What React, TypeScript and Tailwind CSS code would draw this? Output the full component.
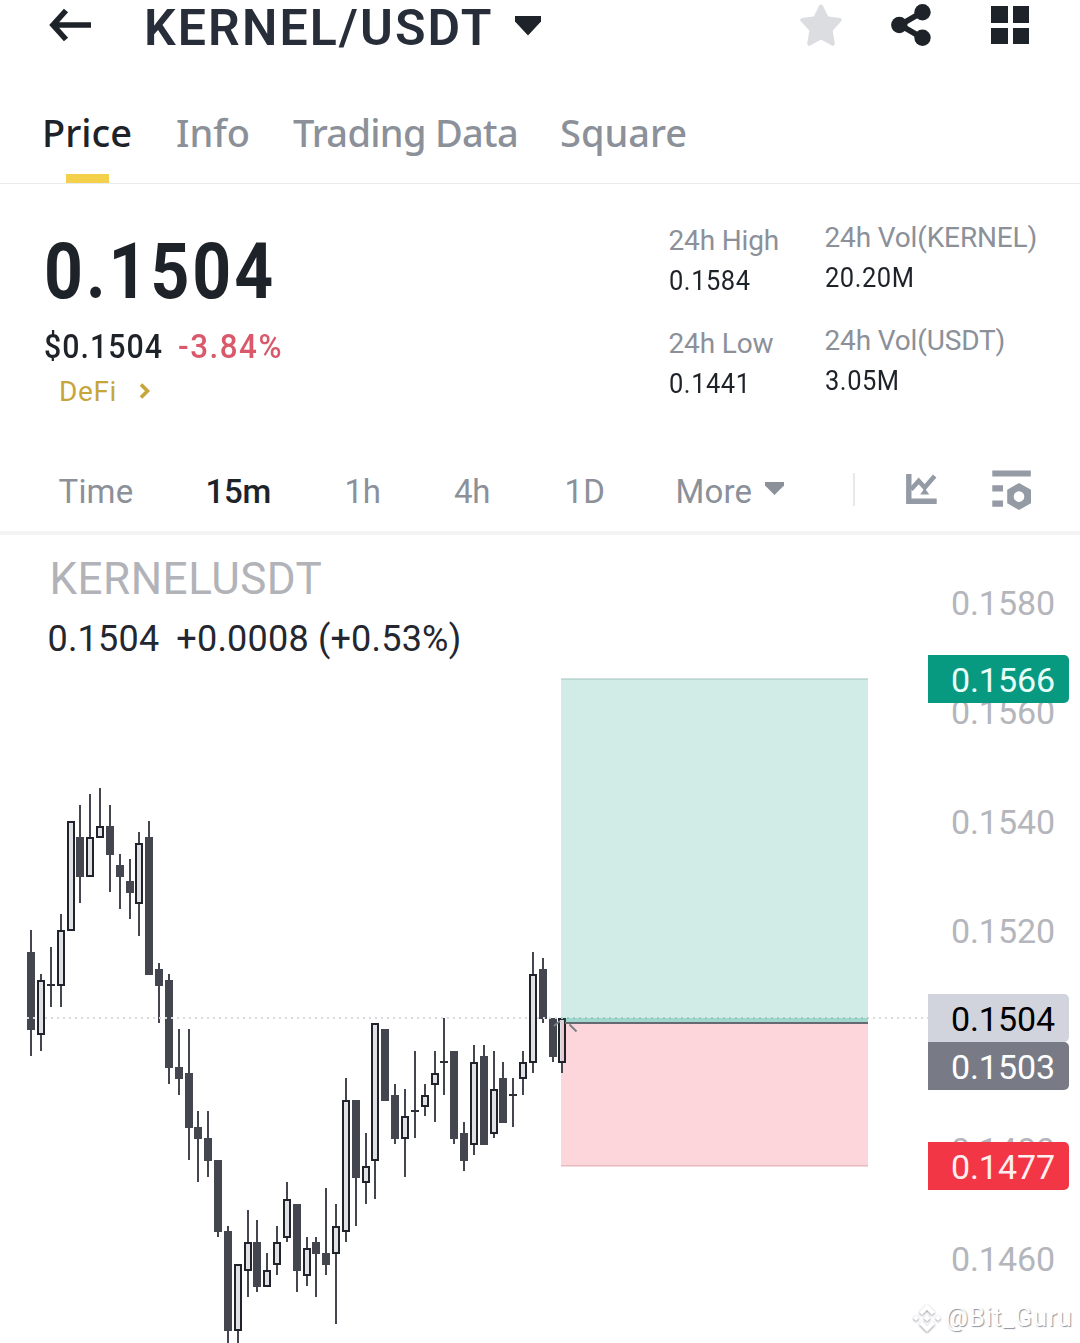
import React from "react";

type Kind = "up" | "down" | "doji";
// [x, high, bodyTop, bodyBottom, low, kind]
type Candle = [number, number, number, number, number, Kind];

const candles: Candle[] = [
  [31, 930, 952, 1030, 1056, "down"],
  [41, 974, 980, 1035, 1051, "up"],
  [51, 947, 985, 985, 1007, "doji"],
  [61, 914, 930, 986, 1007, "up"],
  [71, 821, 821, 931, 931, "up"],
  [80, 805, 837, 877, 903, "down"],
  [90, 794, 837, 877, 877, "up"],
  [100, 788, 826, 838, 838, "up"],
  [110, 805, 826, 855, 892, "down"],
  [120, 854, 865, 877, 909, "down"],
  [130, 859, 881, 893, 919, "down"],
  [139, 832, 843, 904, 936, "up"],
  [149, 821, 837, 975, 975, "down"],
  [159, 963, 969, 986, 1023, "down"],
  [169, 974, 980, 1068, 1084, "down"],
  [179, 1029, 1067, 1079, 1095, "down"],
  [189, 1029, 1073, 1128, 1160, "down"],
  [198, 1111, 1127, 1139, 1182, "down"],
  [208, 1111, 1138, 1161, 1177, "down"],
  [218, 1160, 1160, 1232, 1237, "down"],
  [228, 1226, 1231, 1331, 1343, "down"],
  [238, 1264, 1264, 1331, 1343, "up"],
  [248, 1210, 1242, 1271, 1297, "up"],
  [257, 1220, 1242, 1287, 1292, "down"],
  [267, 1253, 1270, 1287, 1287, "up"],
  [277, 1226, 1242, 1265, 1275, "up"],
  [287, 1182, 1199, 1238, 1242, "up"],
  [297, 1204, 1204, 1271, 1292, "down"],
  [307, 1237, 1248, 1276, 1286, "up"],
  [316, 1237, 1242, 1254, 1297, "down"],
  [326, 1188, 1253, 1265, 1275, "down"],
  [336, 1204, 1226, 1254, 1324, "up"],
  [346, 1078, 1100, 1232, 1242, "up"],
  [356, 1100, 1100, 1178, 1226, "down"],
  [366, 1133, 1166, 1183, 1204, "up"],
  [375, 1023, 1023, 1161, 1199, "up"],
  [385, 1029, 1029, 1101, 1101, "down"],
  [395, 1084, 1095, 1139, 1144, "down"],
  [405, 1089, 1116, 1139, 1177, "up"],
  [415, 1051, 1111, 1111, 1138, "doji"],
  [425, 1084, 1095, 1107, 1116, "up"],
  [435, 1051, 1073, 1085, 1122, "up"],
  [444, 1018, 1062, 1062, 1095, "doji"],
  [454, 1051, 1051, 1139, 1144, "down"],
  [464, 1122, 1133, 1161, 1171, "down"],
  [474, 1045, 1062, 1145, 1155, "up"],
  [484, 1045, 1056, 1145, 1145, "down"],
  [494, 1051, 1089, 1134, 1138, "up"],
  [503, 1062, 1078, 1123, 1123, "down"],
  [513, 1078, 1095, 1095, 1127, "doji"],
  [523, 1051, 1062, 1079, 1095, "up"],
  [533, 952, 974, 1063, 1073, "up"],
  [543, 958, 969, 1019, 1023, "down"],
  [553, 1018, 1018, 1057, 1062, "down"],
  [562, 1018, 1018, 1063, 1073, "up"],
];

function CandleShape({ c }: { c: Candle }) {
  const [x, high, top, bottom, low, kind] = c;
  return (
    <g>
      <rect x={x - 1} y={high} width={2} height={low - high} fill="#43454f" />
      {kind === "down" && <rect x={x - 4} y={top} width={8} height={bottom - top} fill="#43454f" />}
      {kind === "up" && (
        <rect x={x - 3} y={top + 1} width={6} height={bottom - top - 2} fill="#dfe1e5" stroke="#20232b" strokeWidth={2} />
      )}
      {kind === "doji" && <rect x={x - 4} y={top - 1} width={8} height={2} fill="#2c2f38" />}
    </g>
  );
}

function Chart() {
  return (
    <svg className="block h-[808px] w-[928px] shrink-0" viewBox="0 535 928 808">
      <rect x="561" y="1023" width="307" height="143" fill="#fcd6da" />
      {candles.map((c) => (
        <CandleShape key={c[0]} c={c} />
      ))}
      <line x1="27" x2="928" y1="1018" y2="1018" stroke="#d9dadd" strokeWidth="2" strokeDasharray="2 4" />
      <rect x="561" y="679" width="307" height="344" fill="#089981" fillOpacity="0.19" />
      <rect x="561" y="678.5" width="307" height="1" fill="#9fc4bb" />
      <rect x="565" y="1018" width="303" height="5" fill="#089981" fillOpacity="0.24" />
      <rect x="561" y="1020" width="3" height="41" fill="#ecc9ce" />
      <rect x="561" y="1165" width="307" height="1.5" fill="#e9b9be" />
      <rect x="565" y="1022" width="303" height="2" fill="#646a70" />
      <path d="M554 1026l6-5M569.5 1024.5l7 7" stroke="#7b8086" strokeWidth="2" fill="none" />
    </svg>
  );
}

// The 0.1500 gridline label is left blank: the last-price tags occupy its slot.
const ticks = ["0.1580", "0.1560", "0.1540", "0.1520", "", "0.1480", "0.1460"];

function Axis() {
  return (
    <div className="relative flex h-[808px] w-[152px] flex-col overflow-hidden pt-[14px] text-[34px]">
      {ticks.map((t, i) => (
        <div key={i} className="flex h-[109.3px] shrink-0 items-center pl-[23px] tracking-[-0.1px] text-[#b4b6bc]">
          {t}
        </div>
      ))}
      <div className="absolute left-0 top-[120px] flex h-12 w-[141px] items-center rounded-r-[5px] bg-[#089981] pl-[23px] pt-[2px] tracking-[-0.1px] text-[#e9fffa]">0.1566</div>
      <div className="absolute left-0 top-[459px] flex h-12 w-[141px] items-center rounded-r-[5px] bg-[#d1d4dc] pl-[23px] pt-[2px] leading-[40px] tracking-[-0.1px] text-black">0.1504</div>
      <div className="absolute left-0 top-[507px] flex h-12 w-[141px] items-center rounded-r-[5px] bg-[#787b86] pl-[23px] pt-[2px] leading-[40px] tracking-[-0.1px] text-white">0.1503</div>
      <div className="absolute left-0 top-[607px] flex h-12 w-[141px] items-center rounded-r-[5px] bg-[#f23645] pl-[23px] pt-[2px] tracking-[-0.1px] text-[#ffeef0]">0.1477</div>
    </div>
  );
}

function Header() {
  return (
    <header className="flex h-14 text-[#1e2329]">
      <svg className="ml-[48px] mt-[8px] h-[34px] w-[44px]" viewBox="48 8 44 34" fill="none" stroke="currentColor" strokeWidth="5.6">
        <path d="M53 25H91M66 10.5L53 25L66 39.5" />
      </svg>
      <h1 className="ml-[52px] w-[371px] text-[50px] font-semibold leading-[56px] tracking-[2.1px] text-[#272e39]">KERNEL/USDT</h1>
      <svg className="mt-[16px] h-[20px] w-[26px]" viewBox="0 0 26 20" fill="currentColor">
        <path d="M0 0H26V5.5L13 19.5L0 5.5Z" />
      </svg>
      <svg className="ml-[259px] mt-[4px] h-[42px] w-[42px]" viewBox="0 0 42 42" fill="#dcdde1" stroke="#dcdde1" strokeWidth="4" strokeLinejoin="round">
        <path d="M21 2.5L26.8 14.2L39.7 16L30.6 26L32.8 39.8L21 33.2L9.2 39.8L11.4 26L2.3 16L15.2 14.2Z" />
      </svg>
      <svg className="ml-[49px] mt-[4px] h-[42px] w-[40px]" viewBox="0 0 40 42">
        <path d="M31.5 8L9 21L31.5 34" fill="none" stroke="currentColor" strokeWidth="5.6" />
        <circle cx="8.3" cy="21" r="8.2" fill="currentColor" />
        <circle cx="31.5" cy="8.3" r="8.2" fill="currentColor" />
        <circle cx="31.5" cy="33.7" r="8.2" fill="currentColor" />
      </svg>
      <div className="ml-[60px] mt-[6px] grid h-[38px] w-[38px] grid-cols-2 gap-[5px]">
        <i className="bg-[#1e2329]" />
        <i className="bg-[#1e2329]" />
        <i className="bg-[#1e2329]" />
        <i className="bg-[#1e2329]" />
      </div>
    </header>
  );
}

function Tabs() {
  return (
    <nav className="flex h-32 border-b border-[#e9eaec] pl-[42px] font-['Noto_Sans',sans-serif] text-[38px] font-medium leading-[152px] text-[#8b9099]">
      <div className="relative h-full w-[134px] text-[#1e2329]">
        Price
        <span className="absolute bottom-0 left-[24px] h-[9px] w-[43px] bg-[#f5d14b]" />
      </div>
      <div className="w-[117px]">Info</div>
      <div className="w-[267px] tracking-[-0.7px]">Trading Data</div>
      <div>Square</div>
    </nav>
  );
}

function Stat({ label, value }: { label: string; value: string }) {
  return (
    <div className="h-[80px] whitespace-nowrap text-[28px] leading-[40px]">
      <div className="tracking-[-0.15px] text-[#8b9099]">{label}</div>
      <div className="origin-left scale-x-[0.91] tracking-[0.6px] text-[#1e2329]">{value}</div>
    </div>
  );
}

function Quote() {
  return (
    <section className="flex h-[262px]">
      <div className="w-[668.5px] pl-[43.5px] pt-[43px]">
        <div className="origin-left scale-x-[0.87] text-[78px] font-bold leading-[90px] tracking-[3.4px] text-[#1e2329]">0.1504</div>
        <div className="flex h-[60px] items-center whitespace-nowrap text-[33px] font-medium">
          <span className="w-[134px] origin-left scale-x-[0.92] tracking-[1.1px] text-[#1e2329]">$0.1504</span>
          <span className="origin-left scale-x-[0.95] tracking-[1.6px] text-[#d9596a]">-3.84%</span>
        </div>
        <div className="flex h-[30px] items-center pl-[15.5px] text-[28px] text-[#c6a63a]">
          <span className="w-[79.5px] tracking-[0.6px]">DeFi</span>
          <svg className="mt-[-2px] h-[16px] w-[12px]" viewBox="0 0 12 16" fill="none" stroke="currentColor" strokeWidth="3.6">
            <path d="M2 1.5L8.5 8L2 14.5" />
          </svg>
        </div>
      </div>
      <div className="flex w-[156px] flex-col gap-[23px] pt-[37px]">
        <Stat label="24h High" value="0.1584" />
        <Stat label="24h Low" value="0.1441" />
      </div>
      <div className="flex flex-col gap-[23px] pt-[34px]">
        <Stat label="24h Vol(KERNEL)" value="20.20M" />
        <Stat label="24h Vol(USDT)" value="3.05M" />
      </div>
    </section>
  );
}

function Intervals() {
  return (
    <section className="flex h-[89px] items-center border-b-4 border-[#f4f4f5] pl-[58.5px] pt-[7px] text-[33px] tracking-[0.2px] text-[#8b9099]">
      <span className="w-[147px]">Time</span>
      <span className="w-[139px] font-medium tracking-[-0.2px] text-[#1e2329]">15m</span>
      <span className="w-[109.5px] tracking-[-0.2px]">1h</span>
      <span className="w-[110.5px] tracking-[-0.2px]">4h</span>
      <span className="w-[111px]">1D</span>
      <span className="w-[89.5px]">More</span>
      <svg className="mt-[-7px] h-[13px] w-[19px]" viewBox="0 0 19 13" fill="#8b9099">
        <path d="M0 0H19V3.5L9.5 13L0 3.5Z" />
      </svg>
      <span className="ml-[69px] mt-[-6px] h-[33px] w-[2px] bg-[#e6e8ea]" />
      <svg className="ml-[50px] mt-[-7px] h-[32px] w-[34px]" viewBox="905 473 34 32" fill="none" stroke="#949ba5">
        <path d="M908.8 474V501.2H936.7" strokeWidth="5.4" />
        <path d="M911 489.5L918.7 481L924.7 487.5L934.7 476" strokeWidth="4.6" />
        <path d="M924.7 488L929.2 494.5H920.2Z" fill="#949ba5" stroke="none" />
      </svg>
      <svg className="ml-[53px] mt-[-4px] h-[41px] w-[40px]" viewBox="992 470 40 41" fill="#949ba5">
        <path d="M992.3 470.4H1030.8V476.6H992.3ZM992.3 485.2H1003V491.5H992.3ZM992.3 500.4H1003V506.7H992.3Z" />
        <path fillRule="evenodd" d="M1019 483L1031 489.8V503.2L1019 510L1007.2 503.2V489.8ZM1019 491.3A5.3 5.3 0 1 0 1019 501.9A5.3 5.3 0 1 0 1019 491.3Z" />
      </svg>
    </section>
  );
}

function Watermark() {
  return (
    <div className="absolute bottom-[7px] right-[7px] flex h-[36px] items-center text-[25px] text-white">
      <svg className="mr-[3px] h-[32px] w-[32px] drop-shadow-[0_1px_1px_rgba(110,115,130,0.75)]" viewBox="0 0 32 32" fill="#ffffff">
        <path d="M16 2L24 10L21 13L16 8L11 13L8 10ZM16 30L24 22L21 19L16 24L11 19L8 22ZM5 13L8 16L5 19L2 16ZM27 13L30 16L27 19L24 16ZM16 12.5L19.5 16L16 19.5L12.5 16Z" />
      </svg>
      <span className="tracking-[1.2px] [text-shadow:1px_1px_1px_rgba(95,100,115,0.7)]">@Bit_Guru</span>
    </div>
  );
}

export default function App() {
  return (
    <main className="relative h-[1343px] w-[1080px] overflow-hidden bg-white font-[Roboto,sans-serif]">
      <Header />
      <Tabs />
      <Quote />
      <Intervals />
      <section className="relative flex">
        <Chart />
        <Axis />
        <div className="absolute left-[49.5px] top-[18px] text-[#b1b3b8]">
          <div className="text-[44px] leading-[52px] tracking-[0.5px]">KERNELUSDT</div>
          <div className="ml-[-2px] mt-[12px] flex gap-[17px] text-[36px] leading-[44px] tracking-[0.2px] text-[#24272f]">
            <span>0.1504</span>
            <span>+0.0008 (+0.53%)</span>
          </div>
        </div>
      </section>
      <Watermark />
    </main>
  );
}
